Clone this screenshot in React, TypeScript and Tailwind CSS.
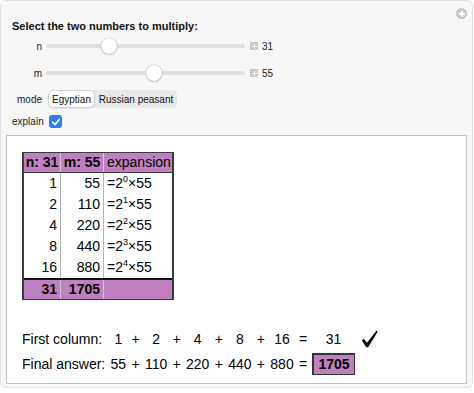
import React from "react";

const rows = [
  { n: 1, m: 55, e: 0 },
  { n: 2, m: 110, e: 1 },
  { n: 4, m: 220, e: 2 },
  { n: 8, m: 440, e: 3 },
  { n: 16, m: 880, e: 4 },
];

function PlusBox() {
  return (
    <div className="ml-[5px] w-[8px] h-[8px] bg-[#c9c9c9] rounded-[1px] relative flex items-center justify-center">
      <div className="absolute w-[5px] h-[1px] bg-white" />
      <div className="absolute w-[1px] h-[5px] bg-white" />
    </div>
  );
}

function Slider({ label, value }: { label: string; value: number }) {
  const pct = (value - 1) / 99;
  return (
    <div className="flex items-center h-[16px]">
      <div className="w-[30px] text-right text-[10px] text-[#222]">{label}</div>
      <div className="relative ml-[4px] w-[199px] h-[16px] flex items-center">
        <div className="w-full h-[4px] rounded-full bg-[#e0e0e0]" />
        <div
          className="absolute top-0 w-[16px] h-[16px] rounded-full bg-white shadow-[0_0_1px_rgba(0,0,0,0.45),0_1px_2px_rgba(0,0,0,0.18)]"
          style={{ left: pct * 183 }}
        />
      </div>
      <PlusBox />
      <span className="ml-[4px] text-[10px] text-[#222]">{value}</span>
    </div>
  );
}

function Check() {
  return (
    <svg width="17" height="18" viewBox="0 0 17 18" className="block">
      <path d="M0.8 10.6 L3 8.9 L6 12.8 L15.6 0.6 L16.8 1.6 L7.2 17.2 L5.3 17.2 Z" fill="#000" />
    </svg>
  );
}

export default function App() {
  const arial = "font-['Liberation_Sans',Arial,sans-serif]";
  return (
    <div className={`w-[474px] h-[393px] bg-white ${arial}`}>
      <div className="relative w-[473px] h-[388px] bg-[#f7f7f7] border border-[#e0e0e0] rounded-[6px] flex flex-col">
        <div className="absolute top-[7px] right-[5px] w-[11px] h-[11px] rounded-full bg-[#c6c6c6] flex items-center justify-center">
          <div className="absolute w-[6px] h-[2px] bg-white" />
          <div className="absolute w-[2px] h-[6px] bg-white" />
        </div>
        <div className="pl-[11px] pt-[18px] text-[11px] leading-[14px] font-bold text-[#111]">
          Select the two numbers to multiply:
        </div>
        <div className="pl-[11px] mt-[5px]">
          <Slider label="n" value={31} />
        </div>
        <div className="pl-[11px] mt-[11px]">
          <Slider label="m" value={55} />
        </div>
        <div className="pl-[11px] mt-[9px] flex items-center h-[18px]">
          <div className="w-[30px] text-right text-[10px] text-[#222]">mode</div>
          <div className="ml-[6px] flex h-[18px] bg-[#e9e9e9] rounded-[5px]">
            <div className="w-[47px] h-[18px] bg-white border border-[#d2d2d2] rounded-[5px] flex items-center justify-center text-[10px] text-[#111] shadow-[0_1px_1px_rgba(0,0,0,0.08)]">
              Egyptian
            </div>
            <div className="w-[82px] h-[18px] flex items-center justify-center text-[10px] text-[#111]">
              Russian peasant
            </div>
          </div>
        </div>
        <div className="pl-[11px] mt-[7px] flex items-center h-[13px]">
          <div className="w-[30px] text-right text-[10px] text-[#222]">explain</div>
          <div className="ml-[7px] w-[13px] h-[13px] rounded-[3px] bg-[#2f7cf6] flex items-center justify-center">
            <svg width="10" height="10" viewBox="0 0 10 10">
              <path d="M1.8 5.2 L4 7.6 L8.3 2.2" stroke="white" strokeWidth="1.7" fill="none" strokeLinecap="round" strokeLinejoin="round" />
            </svg>
          </div>
        </div>
        <div className="ml-[5px] mt-[7px] w-[461px] h-[249px] bg-white border border-[#c2c2c2] pl-[15px] pt-[16px] text-[14px] text-black">
          <div className="w-[152px] border-l-2 border-r-2 border-t border-b border-[#3a3a3a]">
            <div className="flex h-[20px] bg-[#bf80bf] border-b border-[#3a3a3a] leading-[19px]">
              <div className="w-[37px] text-center font-bold border-r border-[#e0c8e0]">n: 31</div>
              <div className="w-[43px] text-center font-bold border-r border-[#e0c8e0]">m: 55</div>
              <div className="flex-1 pl-[3px]">expansion</div>
            </div>
            {rows.map((r) => (
              <div key={r.n} className="flex h-[21px] leading-[21px]">
                <div className="w-[37px] text-right pr-[3px] border-r border-[#b5b5b5]">{r.n}</div>
                <div className="w-[43px] text-right pr-[3px] border-r border-[#b5b5b5]">{r.m}</div>
                <div className="flex-1 pl-[3px]">
                  =2<sup className="text-[9px] relative top-[-6px]">{r.e}</sup>×55
                </div>
              </div>
            ))}
            <div className="flex h-[21px] bg-[#bf80bf] border-t-2 border-[#111] leading-[19px] font-bold">
              <div className="w-[37px] text-right pr-[3px] border-r border-[#d8c0d8]">31</div>
              <div className="w-[43px] text-right pr-[3px] border-r border-[#d8c0d8]">1705</div>
              <div className="flex-1" />
            </div>
          </div>
          <div className="mt-[28px] text-[14px] grid grid-cols-[repeat(13,auto)] justify-start justify-items-center items-center gap-x-[5.3px] gap-y-[3px]">
            <div className="justify-self-start h-[22px] leading-[22px]">First column:</div>
            <div>1</div>
            <div>+</div>
            <div>2</div>
            <div>+</div>
            <div>4</div>
            <div>+</div>
            <div>8</div>
            <div>+</div>
            <div>16</div>
            <div>=</div>
            <div>31</div>
            <div className="ml-[1px]"><Check /></div>
            <div className="justify-self-start h-[22px] leading-[22px]">Final answer:</div>
            <div>55</div>
            <div>+</div>
            <div>110</div>
            <div>+</div>
            <div>220</div>
            <div>+</div>
            <div>440</div>
            <div>+</div>
            <div>880</div>
            <div>=</div>
            <div className="h-[22px] px-[4px] bg-[#bf80bf] border border-[#333] border-l-2 border-t-2 font-bold leading-[19px]">1705</div>
            <div />
          </div>
        </div>
      </div>
    </div>
  );
}
